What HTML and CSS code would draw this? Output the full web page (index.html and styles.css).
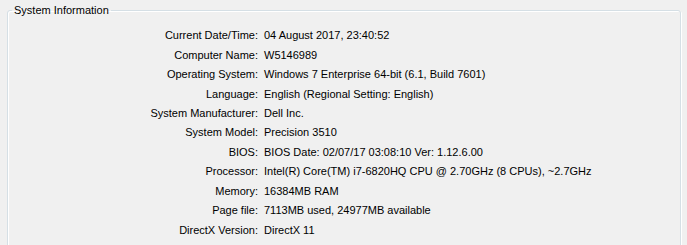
FILE: index.html
```html
<!DOCTYPE html>
<html lang="en">
<head>
  <meta charset="UTF-8" />
  <meta name="viewport" content="width=device-width, initial-scale=1.0"/>
  <title>System Information</title>
  <link rel="stylesheet" href="styles.css">
</head>
<body>
  <fieldset class="group">
    <legend>System Information</legend>
    <div class="info">
      <span class="key">Current Date/Time:</span><span class="val">04 August 2017, 23:40:52</span>
      <span class="key">Computer Name:</span><span class="val">W5146989</span>
      <span class="key">Operating System:</span><span class="val">Windows 7 Enterprise 64-bit (6.1, Build 7601)</span>
      <span class="key">Language:</span><span class="val">English (Regional Setting: English)</span>
      <span class="key">System Manufacturer:</span><span class="val">Dell Inc.</span>
      <span class="key">System Model:</span><span class="val">Precision 3510</span>
      <span class="key">BIOS:</span><span class="val">BIOS Date: 02/07/17 03:08:10 Ver: 1.12.6.00</span>
      <span class="key">Processor:</span><span class="val">Intel(R) Core(TM) i7-6820HQ CPU @ 2.70GHz (8 CPUs), ~2.7GHz</span>
      <span class="key">Memory:</span><span class="val">16384MB RAM</span>
      <span class="key">Page file:</span><span class="val">7113MB used, 24977MB available</span>
      <span class="key">DirectX Version:</span><span class="val">DirectX 11</span>
    </div>
  </fieldset>
</body>
</html>
```

FILE: styles.css
```css
body { margin: 0; background: #f0f0f0; font-family: "Liberation Sans", Arial, sans-serif; font-size: 11px; color: #000; }
.group { margin: 4px 0 0 7px; width: 674px; height: 250px; box-sizing: border-box; padding: 0; border: 1px solid #d5dfe5; border-radius: 3px; box-shadow: inset 1px 1px 0 #fff, 1px 1px 0 #fff; }
.group legend { margin-left: 4px; padding: 0 2px; line-height: 13px; }
.info { display: grid; grid-template-columns: 250px 1fr; column-gap: 6px; grid-auto-rows: 19.45px; align-items: center; margin-top: 8.5px; }
.key { text-align: right; }
.val { white-space: nowrap; }
```
